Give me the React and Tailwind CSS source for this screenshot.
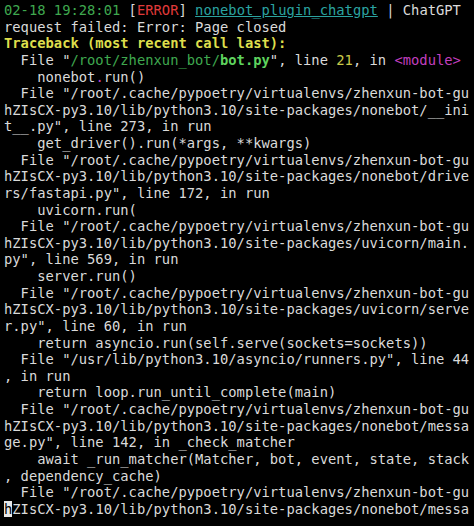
const G = ({ children }) => <span className="text-[#3fa84f]">{children}</span>;
const M = ({ children }) => <span className="text-[#c23fbf]">{children}</span>;
const Y = ({ children }) => <span className="text-[#c9c94a]">{children}</span>;

const plain = [
  '  File "/root/.cache/pypoetry/virtualenvs/zhenxun-bot-gu',
  'hZIsCX-py3.10/lib/python3.10/site-packages/nonebot/__ini',
  't__.py", line 273, in run',
  '    get_driver().run(*args, **kwargs)',
  '  File "/root/.cache/pypoetry/virtualenvs/zhenxun-bot-gu',
  'hZIsCX-py3.10/lib/python3.10/site-packages/nonebot/drive',
  'rs/fastapi.py", line 172, in run',
  '    uvicorn.run(',
  '  File "/root/.cache/pypoetry/virtualenvs/zhenxun-bot-gu',
  'hZIsCX-py3.10/lib/python3.10/site-packages/uvicorn/main.',
  'py", line 569, in run',
  '    server.run()',
  '  File "/root/.cache/pypoetry/virtualenvs/zhenxun-bot-gu',
  'hZIsCX-py3.10/lib/python3.10/site-packages/uvicorn/serve',
  'r.py", line 60, in run',
  '    return asyncio.run(self.serve(sockets=sockets))',
  '  File "/usr/lib/python3.10/asyncio/runners.py", line 44',
  ', in run',
  '    return loop.run_until_complete(main)',
  '  File "/root/.cache/pypoetry/virtualenvs/zhenxun-bot-gu',
  'hZIsCX-py3.10/lib/python3.10/site-packages/nonebot/messa',
  'ge.py", line 142, in _check_matcher',
  '    await _run_matcher(Matcher, bot, event, state, stack',
  ', dependency_cache)',
  '  File "/root/.cache/pypoetry/virtualenvs/zhenxun-bot-gu',
];

export default function App() {
  return (
    <div className="h-[526px] w-[474px] overflow-hidden bg-black pl-[4px] pt-[2px] font-['DejaVu_Sans_Mono',monospace] text-[13.8px] leading-[16.63px] text-[#dadada]">
      <div className="whitespace-pre">
        <G>02-18 19:28:01</G> [<span className="text-[#e03a3a]">ERROR</span>]{' '}
        <span className="text-[#2ba3a0] underline">nonebot_plugin_chatgpt</span> | ChatGPT
      </div>
      <div className="whitespace-pre">request failed: Error: Page closed</div>
      <div className="whitespace-pre font-bold text-[#dede4c]">Traceback (most recent call last):</div>
      <div className="whitespace-pre">
        {'  File "'}
        <G>/root/zhenxun_bot/</G>
        <span className="font-bold text-[#5ed35e]">bot.py</span>
        {'", line '}
        <Y>21</Y>
        {', in '}
        <M>&lt;module&gt;</M>
      </div>
      <div className="whitespace-pre">
        {'    nonebot'}
        <M>.</M>
        {'run()'}
      </div>
      {plain.map((line, i) => (
        <div key={i} className="whitespace-pre">
          {line}
        </div>
      ))}
      <div className="whitespace-pre">
        <span className="bg-[#e8e8e8] text-black">h</span>
        {'ZIsCX-py3.10/lib/python3.10/site-packages/nonebot/messa'}
      </div>
    </div>
  );
}
